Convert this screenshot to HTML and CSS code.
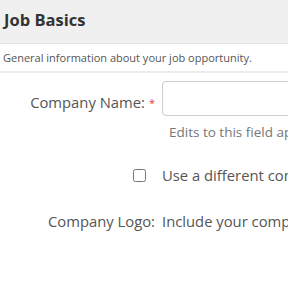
FILE: index.html
```html
<!DOCTYPE html>
<html>
<head>
<meta charset="utf-8">
<link rel="stylesheet" href="styles.css">
</head>
<body>
<div class="page">
  <div class="section-head">Job Basics</div>
  <div class="section-desc">General information about your job opportunity.</div>
  <div class="form">
    <div class="row">
      <label class="label label-name">Company Name:<span class="req">*</span></label>
      <div class="control">
        <input class="text-input" type="text">
        <div class="help">Edits to this field apply to all jobs for this company</div>
      </div>
    </div>
    <div class="row row-check">
      <div class="label check-cell"><input class="check" type="checkbox"></div>
      <div class="control check-text">Use a different company name for this job</div>
    </div>
    <div class="row row-logo">
      <div class="label">Company Logo:</div>
      <div class="control">Include your company logo with this job posting</div>
    </div>
  </div>
</div>
</body>
</html>
```
FILE: styles.css
```css
html, body {
  margin: 0;
  padding: 0;
  overflow: hidden;
  background: #fff;
}
.page {
  width: 600px;
  font-family: "Open Sans", "Liberation Sans", sans-serif;
  color: #555;
}
.section-head {
  background: #f0f0f0;
  height: 44px;
  box-sizing: border-box;
  padding: 0 4px 4px;
  display: flex;
  align-items: center;
  font-size: 16.5px;
  font-weight: 700;
  color: #333;
  border-bottom: 1px solid #e4e4e4;
}
.section-desc {
  height: 27px;
  display: flex;
  align-items: center;
  padding: 0 3px;
  font-size: 11px;
  color: #555;
  border-bottom: 2px solid #ececec;
}
.form {
  padding-top: 8px;
}
.row {
  display: grid;
  grid-template-columns: 155px 1fr;
  column-gap: 7px;
  font-size: 14.8px;
  white-space: nowrap;
}
.label {
  text-align: right;
  color: #555;
  line-height: 20px;
}
.label-name {
  padding-top: 11px;
}
.req {
  color: #e53935;
  font-size: 11px;
  margin-left: 4px;
  position: relative;
  top: -1px;
}
.text-input {
  display: block;
  width: 300px;
  height: 35px;
  box-sizing: border-box;
  border: 1px solid #ccc;
  border-radius: 4px;
  margin: 0;
}
.help {
  margin-top: 6px;
  margin-left: 7px;
  font-size: 13.5px;
  color: #777;
  line-height: 20px;
}
.row-check {
  margin-top: 23px;
}
.check-cell {
  display: flex;
  justify-content: flex-end;
  align-items: center;
}
.check {
  width: 13px;
  height: 13px;
  margin: 0 9px 0 0;
}
.check-text {
  line-height: 20px;
  color: #555;
}
.row-logo {
  margin-top: 26px;
}
.row-logo .control {
  line-height: 20px;
}
```
